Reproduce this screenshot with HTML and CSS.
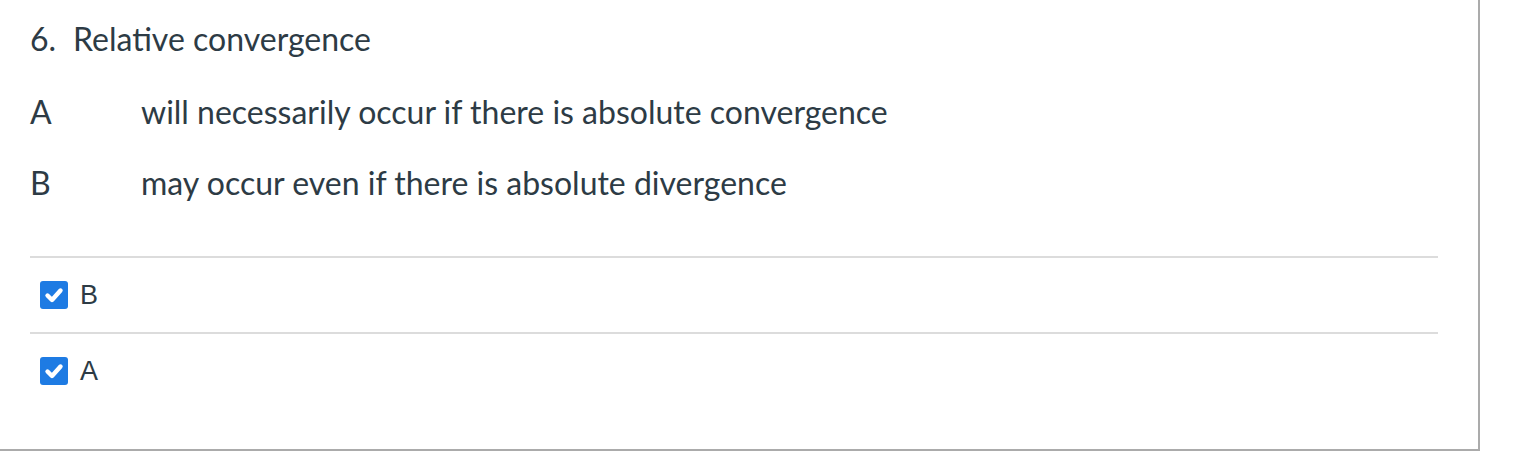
FILE: index.html
```html
<!DOCTYPE html>
<html>
<head>
<meta charset="utf-8">
<link rel="stylesheet" href="styles.css">
</head>
<body>
<div class="card">
  <div class="question">
    <div class="title"><span class="num">6.</span><span>Relative convergence</span></div>
    <div class="options">
      <div class="opt"><span class="letter">A</span><span class="text">will necessarily occur if there is absolute convergence</span></div>
      <div class="opt"><span class="letter">B</span><span class="text">may occur even if there is absolute divergence</span></div>
    </div>
    <div class="answers">
      <label class="answer">
        <span class="box"><svg viewBox="0 0 28 28" width="28" height="28"><path d="M7.5 14.5 L12 19 L20.5 9.5" fill="none" stroke="#fff" stroke-width="4.4" stroke-linecap="round" stroke-linejoin="round"/></svg></span>
        <span class="lbl">B</span>
      </label>
      <label class="answer">
        <span class="box"><svg viewBox="0 0 28 28" width="28" height="28"><path d="M7.5 14.5 L12 19 L20.5 9.5" fill="none" stroke="#fff" stroke-width="4.4" stroke-linecap="round" stroke-linejoin="round"/></svg></span>
        <span class="lbl">A</span>
      </label>
    </div>
  </div>
</div>
</body>
</html>
```
FILE: styles.css
```css
html, body {
  margin: 0;
  padding: 0;
  background: #fff;
}
body {
  font-family: Lato, "Open Sans", sans-serif;
  color: #2d3b45;
}
.card {
  width: 1478px;
  height: 449px;
  border-right: 2px solid #ababab;
  border-bottom: 2px solid #ababab;
  box-sizing: content-box;
}
.question {
  padding: 18px 0 0 30px;
  width: 1408px;
}
.title {
  font-size: 32px;
  line-height: 42px;
  display: flex;
}
.title .num {
  width: 43px;
}
.options {
  margin-top: 31px;
  display: flex;
  flex-direction: column;
  gap: 29px;
}
.opt {
  display: flex;
  font-size: 32px;
  line-height: 42px;
}
.opt .letter {
  width: 111px;
}
.answers {
  margin-top: 52px;
}
.answer {
  display: flex;
  align-items: center;
  gap: 12px;
  height: 74px;
  border-top: 2px solid #dcdcdc;
  padding-left: 10px;
}
.box {
  width: 28px;
  height: 28px;
  border-radius: 3px;
  background: #1e7be3;
  display: flex;
}
.lbl {
  font-family: "Liberation Sans", Arial, sans-serif;
  font-size: 27px;
  line-height: 30px;
}
```
